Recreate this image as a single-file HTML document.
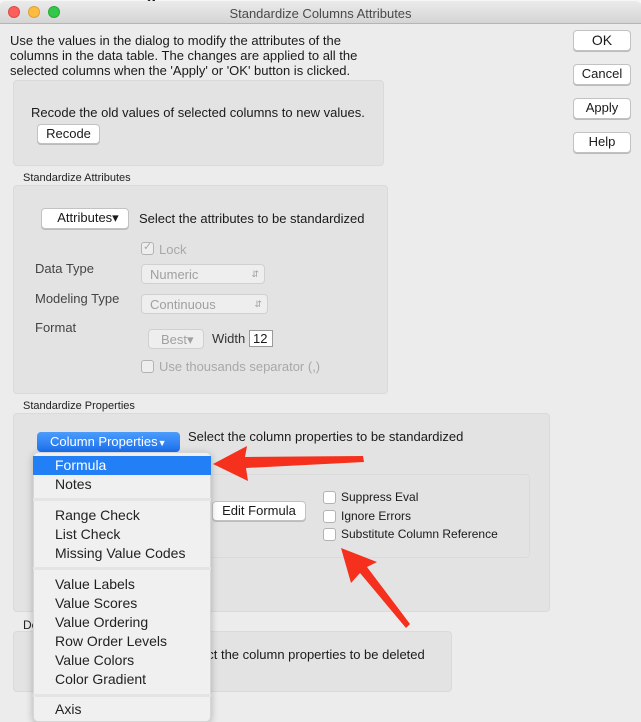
<!DOCTYPE html>
<html><head><style>
*{box-sizing:border-box;margin:0;padding:0}
body{width:641px;height:710px;overflow:hidden;background:#ececec;font-family:"Liberation Sans",sans-serif;font-size:13px;color:#1a1a1a;position:relative}
.a{position:absolute}
.tb{left:0;top:1px;width:641px;height:23px;background:linear-gradient(#ebebeb,#d5d5d5);border-bottom:1px solid #b5b5b5;border-radius:5px 5px 0 0}
.dot{width:12px;height:12px;border-radius:50%;top:6px}
.btn{background:#fff;border:1px solid #c2c2c2;border-radius:4px;text-align:center;font-size:13px;line-height:18px;box-shadow:0 1px 0 #bbb}
.panel{background:#e3e3e3;border:1px solid #dadada;border-radius:4px}
.lbl{font-size:11px;color:#222}
.cb{width:13px;height:13px;border:1px solid #b3b3b3;border-radius:3px;background:#fff}
.gray{color:#a8a8a8}
.sel{background:#eeeeee;border:1px solid #d0d0d0;border-radius:4px;color:#a0a0a0;padding-left:8px;line-height:19px}
.mi{left:55px;font-size:14px;color:#222}
.sep{left:33px;width:178px;height:3px;background:#e4e4e4}
</style></head><body>
<div class="a" style="left:0;top:0;width:641px;height:3px;background:#f6f6f6"></div>
<div class="a" style="left:95px;top:-14px;font-weight:bold;font-size:16px">Leverage Plot</div>
<div class="a tb"></div>
<div class="a dot" style="left:8px;background:#fc605c;border:1px solid #de4a45"></div>
<div class="a dot" style="left:28px;background:#fdbc40;border:1px solid #dea034"></div>
<div class="a dot" style="left:48px;background:#34c84a;border:1px solid #27aa35"></div>
<div class="a" style="left:0;top:6px;width:641px;text-align:center;color:#4a4a4a;font-size:13px">Standardize Columns Attributes</div>

<div class="a" style="left:10px;top:33px;line-height:15px;font-size:13px;width:360px">Use the values in the dialog to modify the attributes of the columns in the data table. The changes are applied to all the selected columns when the 'Apply' or 'OK' button is clicked.</div>

<div class="a btn" style="left:573px;top:30px;width:58px;height:21px;font-size:14px">OK</div>
<div class="a btn" style="left:573px;top:64px;width:58px;height:21px">Cancel</div>
<div class="a btn" style="left:573px;top:98px;width:58px;height:21px">Apply</div>
<div class="a btn" style="left:573px;top:132px;width:58px;height:21px">Help</div>

<div class="a panel" style="left:13px;top:80px;width:371px;height:86px"></div>
<div class="a" style="left:31px;top:105px">Recode the old values of selected columns to new values.</div>
<div class="a btn" style="left:37px;top:124px;width:63px;height:20px">Recode</div>

<div class="a lbl" style="left:23px;top:172px">Standardize Attributes</div>
<div class="a panel" style="left:13px;top:185px;width:375px;height:209px"></div>
<div class="a btn" style="left:41px;top:208px;width:88px;height:21px;padding-left:6px">Attributes&#9662;</div>
<div class="a" style="left:139px;top:211px">Select the attributes to be standardized</div>
<div class="a cb" style="left:141px;top:242px;background:#eee"></div>
<div class="a gray" style="left:143px;top:240px;font-size:11px">&#10003;</div>
<div class="a gray" style="left:159px;top:242px">Lock</div>
<div class="a" style="left:35px;top:261px;color:#444">Data Type</div>
<div class="a sel" style="left:141px;top:264px;width:124px;height:20px">Numeric<span style="position:absolute;right:5px;top:0;font-size:9px">&#8693;</span></div>
<div class="a" style="left:35px;top:291px;color:#444">Modeling Type</div>
<div class="a sel" style="left:141px;top:294px;width:127px;height:20px">Continuous<span style="position:absolute;right:5px;top:0;font-size:9px">&#8693;</span></div>
<div class="a" style="left:35px;top:320px;color:#444">Format</div>
<div class="a sel" style="left:148px;top:329px;width:56px;height:20px;padding-left:12px">Best&#9662;</div>
<div class="a" style="left:212px;top:331px;color:#333">Width</div>
<div class="a" style="left:249px;top:330px;width:24px;height:17px;background:#fff;border:1px solid #999;padding-left:3px;line-height:15px">12</div>
<div class="a cb" style="left:141px;top:360px;background:#eee"></div>
<div class="a gray" style="left:159px;top:359px">Use thousands separator (,)</div>

<div class="a lbl" style="left:23px;top:400px">Standardize Properties</div>
<div class="a panel" style="left:13px;top:413px;width:537px;height:199px"></div>
<div class="a" style="left:37px;top:432px;width:143px;height:20px;background:linear-gradient(#4b9cfb,#1d70ee);border-radius:4px;color:#fff;line-height:20px;padding-left:13px">Column Properties<span style="font-size:9px">&#9660;</span></div>
<div class="a" style="left:188px;top:429px">Select the column properties to be standardized</div>
<div class="a panel" style="left:200px;top:474px;width:330px;height:84px"></div>
<div class="a btn" style="left:212px;top:501px;width:94px;height:20px">Edit Formula</div>
<div class="a cb" style="left:323px;top:491px"></div><div class="a" style="left:341px;top:490px;font-size:12px">Suppress Eval</div>
<div class="a cb" style="left:323px;top:510px"></div><div class="a" style="left:341px;top:509px;font-size:12px">Ignore Errors</div>
<div class="a cb" style="left:323px;top:528px"></div><div class="a" style="left:341px;top:527px;font-size:12px">Substitute Column Reference</div>

<div class="a lbl" style="left:23px;top:618px;font-size:12px">De</div>
<div class="a panel" style="left:13px;top:631px;width:439px;height:61px"></div>
<div class="a" style="left:200px;top:647px">ect the column properties to be deleted</div>

<div class="a" style="left:33px;top:452px;width:178px;height:270px;background:#f0f0f0;border:1px solid #d6d6d6;border-radius:5px;box-shadow:0 2px 8px rgba(0,0,0,.25)"></div>
<div class="a" style="left:33px;top:456px;width:178px;height:19px;background:#237ff5"></div>
<div class="a mi" style="top:457px;color:#fff">Formula</div>
<div class="a mi" style="top:476px">Notes</div>
<div class="a sep" style="top:498px"></div>
<div class="a mi" style="top:507px">Range Check</div>
<div class="a mi" style="top:526px">List Check</div>
<div class="a mi" style="top:545px">Missing Value Codes</div>
<div class="a sep" style="top:567px"></div>
<div class="a mi" style="top:576px">Value Labels</div>
<div class="a mi" style="top:595px">Value Scores</div>
<div class="a mi" style="top:614px">Value Ordering</div>
<div class="a mi" style="top:633px">Row Order Levels</div>
<div class="a mi" style="top:652px">Value Colors</div>
<div class="a mi" style="top:671px">Color Gradient</div>
<div class="a sep" style="top:694px"></div>
<div class="a mi" style="top:701px">Axis</div>

<svg class="a" style="left:0;top:0" width="641" height="710">
<polygon points="213,464 247,446 245,457 363,456 364,462 246,468 248,481" fill="#f5301c"/>
<polygon points="341,548 377,562 367,567 410,624 406,628 360,573 351,583" fill="#f5301c"/>
</svg>
</body></html>
